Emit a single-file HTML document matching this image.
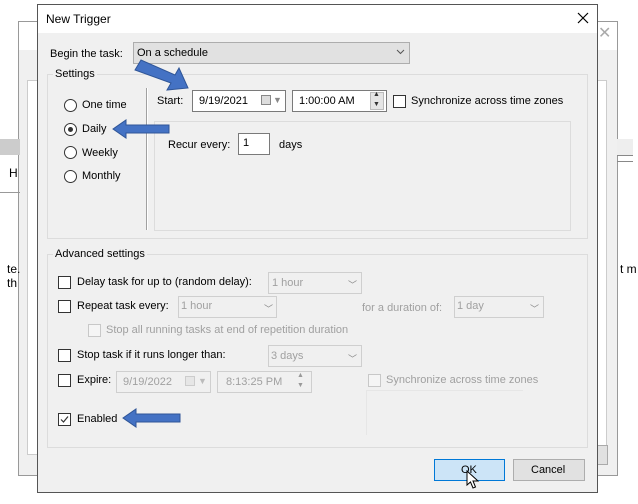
<!DOCTYPE html>
<html><head><meta charset="utf-8"><style>
*{box-sizing:border-box;margin:0;padding:0}
body{width:638px;height:504px;background:#fff;position:relative;overflow:hidden;font-family:"Liberation Sans",sans-serif;font-size:11px;color:#000}
.a{position:absolute}
.t{position:absolute;white-space:nowrap;line-height:14px}
.g{color:#a0a0a0}
.box{position:absolute;border:1px solid #7a7a7a;background:#fff}
.dis{position:absolute;border:1px solid #cfcfcf;background:#f0f0f0}
.cb{position:absolute;width:13px;height:13px;border:1px solid #333;background:#fff}
.cbd{position:absolute;width:13px;height:13px;border:1px solid #c8c8c8;background:#f5f5f5}
.rb{position:absolute;width:13px;height:13px;border:1px solid #333;border-radius:50%;background:#fff}
.grp{position:absolute;border:1px solid #dcdcdc}
.chev{position:absolute;font-size:9px;color:#888}
</style></head><body>
<div class="a" style="left:18px;top:21px;width:600px;height:455px;border:1px solid #999;background:#f0f0f0"></div>
<div class="a" style="left:19px;top:22px;width:598px;height:28px;background:#fff"></div>
<div class="a" style="left:27px;top:80px;width:580px;height:375px;background:#fff;border:1px solid #ccc"></div>
<div class="a" style="left:0;top:139px;width:20px;height:16px;background:#ccc"></div>
<div class="a" style="left:0;top:192px;width:20px;height:1px;background:#999"></div>
<div class="a" style="left:617px;top:139px;width:16px;height:16px;background:#eee"></div>
<div class="a" style="left:617px;top:155px;width:16px;height:1px;background:#888"></div>
<div class="a" style="left:617px;top:161px;width:16px;height:1px;background:#888"></div>
<div class="t" style="left:9px;top:166px;font-size:12px">H</div>
<div class="t" style="left:7px;top:262px;font-size:12px">te.<br>th</div>
<div class="t" style="left:620px;top:262px;font-size:12px">t m</div>
<div class="t" style="left:598px;top:27px;color:#aaa;font-size:16px">✕</div>
<div class="a" style="left:596px;top:445px;width:12px;height:20px;border:1px solid #aaa;background:#e1e1e1"></div>
<div class="a" style="left:37px;top:4px;width:561px;height:489px;border:1px solid #555;background:#f0f0f0"></div>
<div class="a" style="left:38px;top:5px;width:559px;height:28px;background:#fff"></div>
<div class="t" style="left:46px;top:12px;font-size:12px">New Trigger</div>
<svg class="a" style="left:577px;top:12px" width="12" height="12"><path d="M1 1L11 11M11 1L1 11" stroke="#000" stroke-width="1.2"/></svg>

<div class="t" style="left:50px;top:47px">Begin the task:</div>
<div class="a" style="left:133px;top:42px;width:277px;height:22px;border:1px solid #adadad;background:#e1e1e1"></div>
<div class="t" style="left:137px;top:46px">On a schedule</div>
<svg class="a" style="left:396px;top:49px" width="9" height="6"><path d="M1 1L4.5 4.5L8 1" stroke="#555" fill="none"/></svg>

<div class="grp" style="left:47px;top:74px;width:541px;height:165px"></div>
<div class="t" style="left:53px;top:67px;background:#f0f0f0;padding:0 2px">Settings</div>
<div class="a" style="left:146px;top:88px;width:2px;height:142px;background:#a0a0a0;border-right:1px solid #fff"></div>
<div class="rb" style="left:64px;top:99px"></div><div class="t" style="left:82px;top:98px">One time</div>
<div class="rb" style="left:64px;top:123px"></div><div class="a" style="left:68px;top:127px;width:5px;height:5px;border-radius:50%;background:#333"></div><div class="t" style="left:82px;top:122px">Daily</div>
<div class="rb" style="left:64px;top:146px"></div><div class="t" style="left:82px;top:146px">Weekly</div>
<div class="rb" style="left:64px;top:170px"></div><div class="t" style="left:82px;top:169px">Monthly</div>

<div class="t" style="left:157px;top:94px">Start:</div>
<div class="box" style="left:192px;top:90px;width:94px;height:22px"></div>
<div class="t" style="left:199px;top:94px">9/19/2021</div>
<div class="a" style="left:261px;top:95px;width:10px;height:10px;border:1px solid #888;background:#ddd"></div>
<div class="chev" style="left:273px;top:95px">▼</div>
<div class="box" style="left:292px;top:90px;width:95px;height:22px"></div>
<div class="t" style="left:299px;top:94px">1:00:00 AM</div>
<div class="a" style="left:370px;top:92px;width:14px;height:18px;background:#e5e5e5;border:1px solid #bbb"></div>
<div class="chev" style="left:373px;top:91px;font-size:7px;color:#333">▲</div>
<div class="chev" style="left:373px;top:101px;font-size:7px;color:#333">▼</div>
<div class="cb" style="left:393px;top:95px"></div>
<div class="t" style="left:411px;top:94px">Synchronize across time zones</div>

<div class="grp" style="left:154px;top:121px;width:417px;height:110px"></div>
<div class="t" style="left:168px;top:138px">Recur every:</div>
<div class="box" style="left:238px;top:133px;width:32px;height:22px"></div>
<div class="t" style="left:243px;top:136px">1</div>
<div class="t" style="left:279px;top:138px">days</div>

<div class="grp" style="left:47px;top:254px;width:541px;height:194px"></div>
<div class="t" style="left:53px;top:247px;background:#f0f0f0;padding:0 2px">Advanced settings</div>

<div class="cb" style="left:58px;top:276px"></div><div class="t" style="left:77px;top:275px">Delay task for up to (random delay):</div>
<div class="dis" style="left:268px;top:272px;width:94px;height:22px"></div><div class="t g" style="left:272px;top:276px">1 hour</div><div class="chev" style="left:348px;top:278px">﹀</div>

<div class="cb" style="left:58px;top:300px"></div><div class="t" style="left:77px;top:299px">Repeat task every:</div>
<div class="dis" style="left:178px;top:296px;width:99px;height:22px"></div><div class="t g" style="left:181px;top:299px">1 hour</div><div class="chev" style="left:264px;top:302px">﹀</div>
<div class="t g" style="left:362px;top:301px">for a duration of:</div>
<div class="dis" style="left:454px;top:296px;width:90px;height:22px"></div><div class="t g" style="left:457px;top:299px">1 day</div><div class="chev" style="left:530px;top:302px">﹀</div>

<div class="cbd" style="left:88px;top:324px"></div><div class="t g" style="left:106px;top:323px">Stop all running tasks at end of repetition duration</div>

<div class="cb" style="left:58px;top:349px"></div><div class="t" style="left:77px;top:348px">Stop task if it runs longer than:</div>
<div class="dis" style="left:268px;top:345px;width:94px;height:22px"></div><div class="t g" style="left:271px;top:349px">3 days</div><div class="chev" style="left:348px;top:352px">﹀</div>

<div class="cb" style="left:58px;top:374px"></div><div class="t" style="left:77px;top:373px">Expire:</div>
<div class="dis" style="left:116px;top:371px;width:95px;height:22px"></div><div class="t g" style="left:123px;top:375px">9/19/2022</div>
<div class="a" style="left:185px;top:376px;width:10px;height:10px;border:1px solid #ccc;background:#e6e6e6"></div><div class="chev" style="left:198px;top:376px;color:#bbb">▼</div>
<div class="dis" style="left:217px;top:371px;width:95px;height:22px"></div><div class="t g" style="left:226px;top:375px">8:13:25 PM</div>
<div class="chev" style="left:297px;top:372px;font-size:7px;color:#999">▲</div><div class="chev" style="left:297px;top:382px;font-size:7px;color:#999">▼</div>
<div class="cbd" style="left:368px;top:374px"></div><div class="t g" style="left:386px;top:373px">Synchronize across time zones</div>
<div class="a" style="left:366px;top:390px;width:157px;height:45px;border-left:1px solid #e6e6e6;border-top:1px solid #e6e6e6"></div>

<div class="cb" style="left:58px;top:413px"></div>
<svg class="a" style="left:59px;top:414px" width="11" height="11"><path d="M2 5.5L4.5 8L9 2.5" stroke="#333" fill="none" stroke-width="1.2"/></svg>
<div class="t" style="left:77px;top:412px">Enabled</div>

<div class="a" style="left:434px;top:459px;width:71px;height:22px;border:1px solid #0078d7;background:#cce4f7"></div>
<div class="t" style="left:461px;top:463px">OK</div>
<div class="a" style="left:513px;top:459px;width:72px;height:22px;border:1px solid #adadad;background:#e1e1e1"></div>
<div class="t" style="left:531px;top:463px">Cancel</div>
<svg class="a" style="left:466px;top:470px" width="14" height="20"><path d="M1 1L1 15L4.5 12L7 18L9.5 17L7 11L12 11Z" fill="#fff" stroke="#000"/></svg>

<svg class="a" style="left:0;top:0" width="638" height="504">
<path d="M135 70L141 60L175 75L179 68L188 88L167 90L171 83Z" fill="#4472c4" stroke="#2f5597"/>
<path d="M113 129L126 120L126 125L169 125L169 133L126 133L126 138Z" fill="#4472c4" stroke="#2f5597"/>
<path d="M123 418L136 409L136 414L180 414L180 422L136 422L136 427Z" fill="#4472c4" stroke="#2f5597"/>
</svg>
</body></html>
